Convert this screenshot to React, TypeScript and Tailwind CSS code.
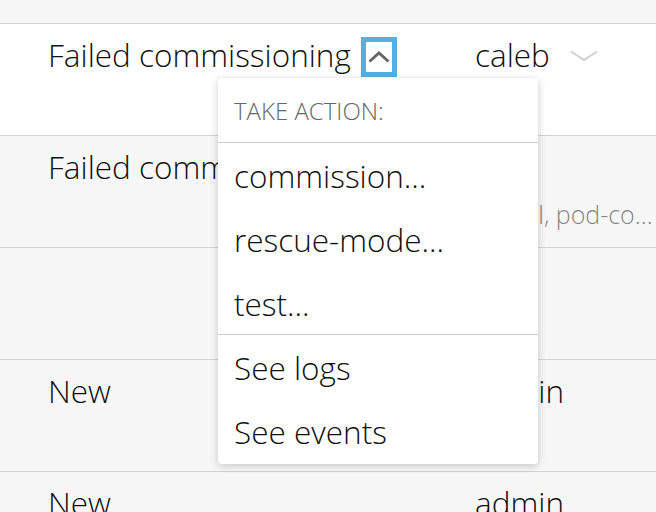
import React from 'react';

const font = { fontFamily: '"Open Sans", "Noto Sans", sans-serif' };

type Row = {
  status: string;
  owner: string;
  sub?: string;
  active?: boolean;
};

const rows: Row[] = [
  { status: 'Failed commissioning', owner: 'caleb', active: true },
  { status: 'Failed commissioning', owner: 'lee', sub: 'virtual, pod-console-logging' },
  { status: '', owner: '' },
  { status: 'New', owner: 'admin' },
  { status: 'New', owner: 'admin' },
];

const ChevronUp = () => (
  <svg width="22" height="14" viewBox="0 0 22 14" fill="none">
    <path d="M1.5 11.5 L11 3 L20.5 11.5" stroke="#666" strokeWidth="3" />
  </svg>
);

const ChevronDown = () => (
  <svg width="28" height="12" viewBox="0 0 28 12" fill="none">
    <path d="M1 1.5 L14 10 L27 1.5" stroke="#d0d0d0" strokeWidth="2" />
  </svg>
);

const ActionMenu: React.FC = () => {
  const actions = ['commission...', 'rescue-mode...', 'test...'];
  const links = ['See logs', 'See events'];
  return (
    <div className="absolute left-[218px] top-[78px] w-[320px] rounded-[4px] bg-white shadow-[0_2px_8px_rgba(0,0,0,0.2)]">
      <div className="px-4 pt-[16px] pb-[14px] text-[24px] leading-[34px] uppercase text-[#666] font-light">
        Take action:
      </div>
      <div className="border-t border-[#cdcdcd] pt-[9px] pb-[6px] flex flex-col gap-[16px]">
        {actions.map(a => (
          <div key={a} className="px-4 text-[31.5px] leading-[48px] font-light text-[#111]">{a}</div>
        ))}
      </div>
      <div className="border-t border-[#cdcdcd] pt-[9px] pb-[8px] flex flex-col gap-[16px]">
        {links.map(a => (
          <div key={a} className="px-4 text-[31.5px] leading-[48px] font-light text-[#111]">{a}</div>
        ))}
      </div>
    </div>
  );
};

export default function App() {
  return (
    <div className="relative w-[656px] h-[512px] overflow-hidden bg-[#f7f7f7]" style={font}>
      <div className="h-[23px]" />
      {rows.map((r, i) => (
        <div
          key={i}
          className={`h-[112px] border-t border-[#d3d3d3] flex pl-[48px] pt-[7px] ${r.active ? 'bg-white' : 'bg-[#f7f7f7]'}`}
        >
          <div className="w-[427px] shrink-0 flex items-start">
            <span className="text-[31.5px] leading-[48px] font-light text-[#111] whitespace-nowrap">{r.status}</span>
            {r.active && (
              <span className="ml-[10px] mt-[6px] w-[36px] h-[40px] border-[5px] border-[#52b0e7] bg-white flex items-center justify-center">
                <ChevronUp />
              </span>
            )}
          </div>
          <div className="flex-1 min-w-0 flex flex-col">
            <div className="flex items-center">
              <span className="text-[31.5px] leading-[48px] font-light text-[#111]">{r.owner}</span>
              {r.active && (
                <span className="ml-[20px] mt-[2px]">
                  <ChevronDown />
                </span>
              )}
            </div>
            {r.sub && (
              <div className="mt-[5px] mr-[-6px] text-[25px] leading-[36px] font-light text-[#888] whitespace-nowrap overflow-hidden text-ellipsis">
                {r.sub}
              </div>
            )}
          </div>
        </div>
      ))}
      <ActionMenu />
    </div>
  );
}
